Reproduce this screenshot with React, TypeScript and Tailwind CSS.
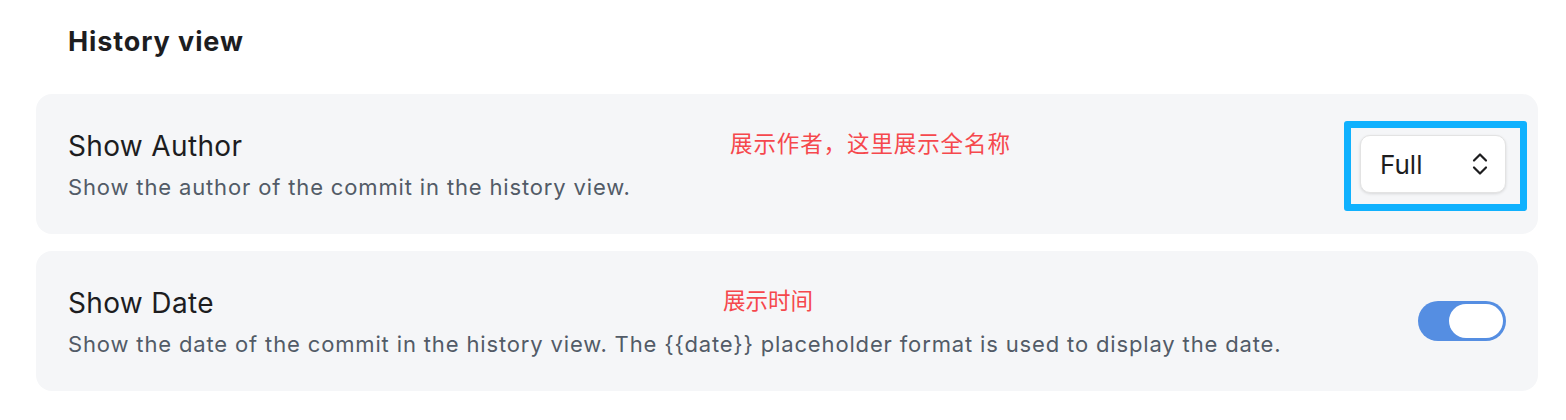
function UpDownIcon() {
  return (
    <svg width="16" height="24" viewBox="0 0 16 24" fill="none" stroke="currentColor" strokeWidth="2.2" strokeLinecap="round" strokeLinejoin="round">
      <path d="M2 8.5 8 2.5l6 6" />
      <path d="M2 15.5l6 6 6-6" />
    </svg>
  );
}

function SettingCard({
  title,
  description,
  note,
  noteClass,
  children,
}: {
  title: string;
  description: string;
  note: string;
  noteClass: string;
  children: React.ReactNode;
}) {
  return (
    <div className="relative flex h-[140px] items-center justify-between rounded-[16px] bg-[#f5f6f8] pl-[32px] pr-[32px]">
      <div className="flex flex-col">
        <div className="text-[28px] leading-[40px] tracking-[0.35px] text-[#1d1d1f]">{title}</div>
        <div className="mt-[6px] text-[22px] leading-[30px] tracking-[0.85px] text-[#525b67]">{description}</div>
      </div>
      <span
        className={`absolute text-[22.5px] leading-[30px] text-[#f5484d] [font-family:'Noto_Sans_CJK_SC',sans-serif] ${noteClass}`}
      >
        {note}
      </span>
      {children}
    </div>
  );
}

export default function App() {
  return (
    <div className="min-h-screen bg-white pl-[36px] pr-[28px] pt-[24px] [font-family:Inter,'Noto_Sans_CJK_SC',sans-serif]">
      <h2 className="pl-[32px] text-[27px] font-bold leading-[36px] tracking-[0.9px] text-[#1d1d1f]">History view</h2>

      <div className="mt-[34px] flex flex-col gap-[17px]">
        <SettingCard
          title="Show Author"
          description="Show the author of the commit in the history view."
          note="展示作者，这里展示全名称"
          noteClass="left-[694px] top-[33px] tracking-[0.9px]"
        >
          <div className="relative">
            <span className="pointer-events-none absolute -bottom-[18px] -left-[16px] -right-[21px] -top-[14px] rounded-[3px] border-[7px] border-[#10b1fe]" />
            <button className="flex h-[58px] w-[146px] items-center justify-between rounded-[10px] border border-[#e3e3e3] bg-white pl-[19px] pr-[17px] text-[26px] text-[#1d1d1f] shadow-[0_1px_3px_rgba(0,0,0,0.12)]">
              <span>Full</span>
              <UpDownIcon />
            </button>
          </div>
        </SettingCard>

        <SettingCard
          title="Show Date"
          description="Show the date of the commit in the history view. The {{date}} placeholder format is used to display the date."
          note="展示时间"
          noteClass="left-[687px] top-[33px]"
        >
          <button className="flex h-[40px] w-[88px] items-center justify-end rounded-full bg-[#558ee2] p-[3px]">
            <span className="h-[34px] w-[54px] rounded-full bg-white" />
          </button>
        </SettingCard>
      </div>
    </div>
  );
}
